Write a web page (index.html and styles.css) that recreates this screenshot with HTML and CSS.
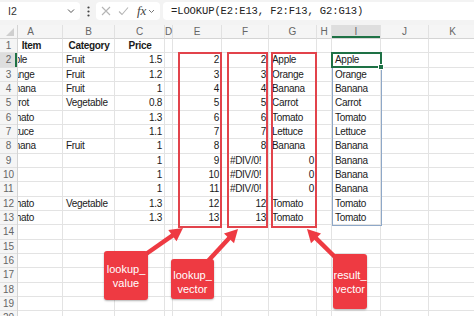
FILE: index.html
```html
<!DOCTYPE html>
<html>
<head>
	<title>LOOKUP</title>
	<link rel="stylesheet" href="styles.css">
</head>
<body>
	<div class="formula-bar">
		<div class="name-box">
			<span>I2</span>
			<svg width="8" height="6" viewBox="0 0 8 6"><path d="M1 1.5 L4 4.5 L7 1.5" fill="none" stroke="#555" stroke-width="1"/></svg>
		</div>
		<div class="grip">
			<svg width="3" height="11" viewBox="0 0 3 11"><circle cx="1.5" cy="1.5" r="1.1" fill="#444"/><circle cx="1.5" cy="5.5" r="1.1" fill="#444"/><circle cx="1.5" cy="9.5" r="1.1" fill="#444"/></svg>
		</div>
		<div class="tools">
			<svg width="10" height="10" viewBox="0 0 10 10"><path d="M1 1 L9 9 M9 1 L1 9" stroke="#b5b5b5" stroke-width="1.1"/></svg>
			<svg width="11" height="10" viewBox="0 0 11 10"><path d="M1 5.5 L4 8.5 L10 1.5" fill="none" stroke="#b5b5b5" stroke-width="1.1"/></svg>
			<i class="fx">fx</i>
			<svg width="7" height="5" viewBox="0 0 7 5"><path d="M1 1 L3.5 3.5 L6 1" fill="none" stroke="#777" stroke-width="1"/></svg>
		</div>
		<div class="formula">=LOOKUP(E2:E13, F2:F13, G2:G13)</div>
	</div>

	<div class="sheet">
		<div class="row-heads">
			<div class="corner"><span class="select-all"></span></div>
			<div>1</div><div class="sel">2</div><div>3</div><div>4</div><div>5</div>
			<div>6</div><div>7</div><div>8</div><div>9</div><div>10</div>
			<div>11</div><div>12</div><div>13</div><div>14</div><div>15</div>
			<div>16</div><div>17</div><div>18</div><div>19</div><div>20</div>
		</div>
		<table class="grid">
			<colgroup>
				<col style="width:64px"><col style="width:52px"><col style="width:50px"><col style="width:8px">
				<col style="width:49px"><col style="width:47px"><col style="width:48px"><col style="width:15px">
				<col style="width:49px"><col style="width:48px"><col style="width:48px">
			</colgroup>
			<tr class="col-heads"><th>A</th><th>B</th><th>C</th><th>D</th><th>E</th><th>F</th><th>G</th><th>H</th><th class="sel">I</th><th>J</th><th>K</th></tr>
			<tr><td class="c b">Item</td><td class="c b">Category</td><td class="c b">Price</td><td></td><td></td><td></td><td></td><td></td><td></td><td></td><td></td></tr>
			<tr><td>Apple</td><td>Fruit</td><td class="n">1.5</td><td></td><td class="n">2</td><td class="n">2</td><td>Apple</td><td></td><td>Apple</td><td></td><td></td></tr>
			<tr><td>Orange</td><td>Fruit</td><td class="n">1.2</td><td></td><td class="n">3</td><td class="n">3</td><td>Orange</td><td></td><td>Orange</td><td></td><td></td></tr>
			<tr><td>Banana</td><td>Fruit</td><td class="n">1</td><td></td><td class="n">4</td><td class="n">4</td><td>Banana</td><td></td><td>Banana</td><td></td><td></td></tr>
			<tr><td>Carrot</td><td>Vegetable</td><td class="n">0.8</td><td></td><td class="n">5</td><td class="n">5</td><td>Carrot</td><td></td><td>Carrot</td><td></td><td></td></tr>
			<tr><td>Tomato</td><td></td><td class="n">1.3</td><td></td><td class="n">6</td><td class="n">6</td><td>Tomato</td><td></td><td>Tomato</td><td></td><td></td></tr>
			<tr><td>Lettuce</td><td></td><td class="n">1.1</td><td></td><td class="n">7</td><td class="n">7</td><td>Lettuce</td><td></td><td>Lettuce</td><td></td><td></td></tr>
			<tr><td>Banana</td><td>Fruit</td><td class="n">1</td><td></td><td class="n">8</td><td class="n">8</td><td>Banana</td><td></td><td>Banana</td><td></td><td></td></tr>
			<tr><td></td><td></td><td class="n">1</td><td></td><td class="n">9</td><td class="c">#DIV/0!</td><td class="n">0</td><td></td><td>Banana</td><td></td><td></td></tr>
			<tr><td></td><td></td><td class="n">1</td><td></td><td class="n">10</td><td class="c">#DIV/0!</td><td class="n">0</td><td></td><td>Banana</td><td></td><td></td></tr>
			<tr><td></td><td></td><td class="n">1</td><td></td><td class="n">11</td><td class="c">#DIV/0!</td><td class="n">0</td><td></td><td>Banana</td><td></td><td></td></tr>
			<tr><td>Tomato</td><td>Vegetable</td><td class="n">1.3</td><td></td><td class="n">12</td><td class="n">12</td><td>Tomato</td><td></td><td>Tomato</td><td></td><td></td></tr>
			<tr><td>Tomato</td><td></td><td class="n">1.3</td><td></td><td class="n">13</td><td class="n">13</td><td>Tomato</td><td></td><td>Tomato</td><td></td><td></td></tr>
			<tr><td></td><td></td><td></td><td></td><td></td><td></td><td></td><td></td><td></td><td></td><td></td></tr>
			<tr><td></td><td></td><td></td><td></td><td></td><td></td><td></td><td></td><td></td><td></td><td></td></tr>
			<tr><td></td><td></td><td></td><td></td><td></td><td></td><td></td><td></td><td></td><td></td><td></td></tr>
			<tr><td></td><td></td><td></td><td></td><td></td><td></td><td></td><td></td><td></td><td></td><td></td></tr>
			<tr><td></td><td></td><td></td><td></td><td></td><td></td><td></td><td></td><td></td><td></td><td></td></tr>
			<tr><td></td><td></td><td></td><td></td><td></td><td></td><td></td><td></td><td></td><td></td><td></td></tr>
			<tr><td></td><td></td><td></td><td></td><td></td><td></td><td></td><td></td><td></td><td></td><td></td></tr>
		</table>
	</div>

	<!-- selection + annotations drawn over the grid -->
	<div class="spill"></div>
	<div class="active"><span class="handle"></span></div>

	<div class="range range-e"></div>
	<div class="range range-f"></div>
	<div class="range range-g"></div>

	<svg class="arrows" width="474" height="316" viewBox="0 0 474 316">
		<g stroke="#ee3a42" stroke-width="4.5" fill="#ee3a42">
			<line x1="146" y1="254" x2="173" y2="235.2"/>
			<line x1="208" y1="261" x2="229.5" y2="237.8"/>
			<line x1="336" y1="258" x2="315.6" y2="237.9"/>
		</g>
		<g fill="#ee3a42">
			<polygon points="183,228 176.5,241.3 168.3,229.9"/>
			<polygon points="238,229 234,243.2 224,233.4"/>
			<polygon points="307,229 321,233.5 311,243.3"/>
		</g>
	</svg>

	<div class="callout note-value">lookup_<br>value</div>
	<div class="callout note-vector">lookup_<br>vector</div>
	<div class="callout note-result">result_<br>vector</div>
</body>
</html>
```

FILE: styles.css
```css
body {
	margin: 0;
	width: 474px;
	height: 316px;
	overflow: hidden;
	position: relative;
	background: #f3f3f3;
	font-family: "Liberation Sans", sans-serif;
	font-size: 10px;
	letter-spacing: -0.3px;
	color: #1a1a1a;
}

/* formula bar */
.formula-bar {
	display: flex;
	align-items: center;
	height: 22px;
	margin-bottom: 3px;
}
.name-box {
	box-sizing: border-box;
	width: 80px;
	height: 18px;
	display: flex;
	align-items: center;
	justify-content: space-between;
	padding: 0 5px 0 8px;
	background: #fff;
	border-radius: 0 4px 4px 0;
	font-size: 10.5px;
	letter-spacing: 0;
	color: #333;
}
.grip {
	width: 16px;
	display: flex;
	justify-content: center;
}
.tools {
	box-sizing: border-box;
	width: 64px;
	height: 18px;
	display: flex;
	align-items: center;
	gap: 7px;
	padding-left: 5px;
	background: #fff;
	border-radius: 4px;
}
.fx {
	font-family: "Liberation Serif", serif;
	font-size: 13px;
	letter-spacing: 0;
	color: #444;
	margin-left: 1px;
	margin-right: -5px;
}
.formula {
	flex: 1;
	height: 18px;
	margin-left: 3px;
	padding-left: 8px;
	background: #fff;
	border-radius: 4px 0 0 4px;
	font-family: "Liberation Mono", monospace;
	font-size: 10.5px;
	letter-spacing: -0.1px;
	line-height: 18px;
	color: #222;
}

/* sheet */
.sheet {
	display: flex;
	height: 291px;
	overflow: hidden;
	background: #fff;
}
.row-heads {
	flex: 0 0 18px;
	position: relative;
	z-index: 1;
	background: #f5f5f5;
	border-right: 1px solid #d4d4d4;
	box-sizing: border-box;
	color: #666;
	font-size: 10px;
	letter-spacing: 0;
	text-align: center;
}
.row-heads div {
	box-sizing: border-box;
	height: 14.33px;
	line-height: 14px;
	border-bottom: 1px solid #e1e1e1;
}
.row-heads .corner {
	height: 14px;
	border-bottom: 1px solid #d4d4d4;
	position: relative;
}
.select-all {
	position: absolute;
	right: 3px;
	bottom: 2px;
	border-left: 8px solid transparent;
	border-bottom: 8px solid #cfcfcf;
}
.row-heads .sel {
	background: #dedede;
	box-shadow: inset -2px 0 #1e7145;
}

.grid {
	flex: 0 0 auto;
	margin-left: -19px;
	table-layout: fixed;
	width: 478px;
	border-collapse: separate;
	border-spacing: 0;
}
.grid tr {
	height: 14.33px;
}
.grid tr.col-heads {
	height: 14px;
}
.grid th {
	padding: 0;
	font-weight: normal;
	letter-spacing: 0;
	color: #666;
	background: #f5f5f5;
	border-right: 1px solid #e1e1e1;
	border-bottom: 1px solid #d4d4d4;
	line-height: 13px;
}
.grid th.sel {
	background: #dedede;
	box-shadow: inset 0 -2px #1e7145;
}
.grid td {
	padding: 0 2px 0 3px;
	border-right: 1px solid #e3e3e3;
	border-bottom: 1px solid #e3e3e3;
	white-space: nowrap;
	overflow: hidden;
	line-height: 13px;
}
.grid td:first-child {
	padding-left: 4px;
}
.grid td.n {
	text-align: right;
}
.grid td.c {
	text-align: center;
}
.grid td.b {
	font-weight: bold;
}

/* selection */
.spill {
	position: absolute;
	left: 332px;
	top: 53px;
	width: 48px;
	height: 171px;
	border: 1px solid #8ea8c8;
}
.active {
	position: absolute;
	left: 331px;
	top: 52px;
	width: 47px;
	height: 12px;
	border: 2px solid #1e7145;
}
.handle {
	position: absolute;
	right: -4px;
	bottom: -4px;
	width: 4px;
	height: 4px;
	background: #1e7145;
	border: 1px solid #fff;
}

/* annotations */
.range {
	position: absolute;
	top: 52px;
	height: 176px;
	box-sizing: border-box;
	border: 2px solid #e2434b;
}
.range-e {
	left: 178px;
	width: 44px;
}
.range-f {
	left: 227px;
	width: 41px;
}
.range-g {
	left: 271px;
	width: 46px;
}
.arrows {
	position: absolute;
	left: 0;
	top: 0;
}
.callout {
	position: absolute;
	display: flex;
	align-items: center;
	justify-content: center;
	box-sizing: border-box;
	background: #ee3a42;
	color: #fff;
	border-radius: 3px;
	box-shadow: 0 1px 2px rgba(0, 0, 0, 0.3);
	font-size: 11px;
	letter-spacing: 0;
	line-height: 14px;
	text-align: center;
}
.note-value {
	left: 104px;
	top: 251px;
	width: 44px;
	height: 49px;
}
.note-vector {
	left: 171px;
	top: 259px;
	width: 43px;
	height: 40px;
	padding-top: 5px;
}
.note-result {
	left: 333px;
	top: 254px;
	width: 34px;
	height: 55px;
	padding-top: 1px;
}
```
